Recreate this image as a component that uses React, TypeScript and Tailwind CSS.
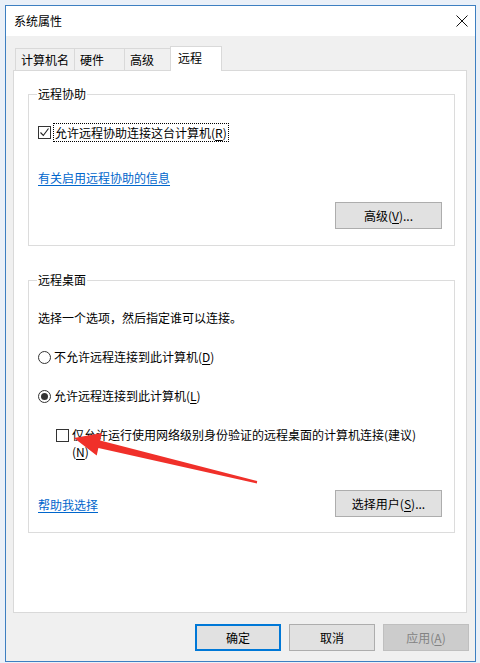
import type { ReactNode } from "react";

const font = "font-['Noto_Sans_CJK_SC','Noto_Sans',sans-serif]";

function Key({ k }: { k: string }) {
    return (
        <>
            (<span className="underline underline-offset-2">{k}</span>)
        </>
    );
}

function CheckBox({ checked }: { checked?: boolean }) {
    return (
        <span className="w-[13px] h-[13px] border border-[#333] bg-white flex items-center justify-center shrink-0">
            {checked && (
                <svg width="11" height="11" viewBox="0 0 11 11" fill="none">
                    <path d="M1.5 5.5l2.8 3 5.2-7" stroke="#222" strokeWidth="1.1" />
                </svg>
            )}
        </span>
    );
}

function Radio({ checked }: { checked?: boolean }) {
    return (
        <span className="w-[13px] h-[13px] rounded-full border border-[#333] bg-white flex items-center justify-center shrink-0">
            {checked && <span className="w-[7px] h-[7px] rounded-full bg-[#333]" />}
        </span>
    );
}

function Button({ children, variant = "normal", className = "" }: { children: ReactNode; variant?: "normal" | "default" | "disabled"; className?: string }) {
    const look =
        variant === "default"
            ? "border-2 border-[#0078d7] bg-[#e1e1e1] text-black"
            : variant === "disabled"
            ? "border border-[#bfbfbf] bg-[#cccccc] text-[#838383]"
            : "border border-[#adadad] bg-[#e1e1e1] text-black";
    return (
        <div className={`h-[27px] flex items-center justify-center text-[12px] ${look} ${className}`}>
            {children}
        </div>
    );
}

function GroupBox({ title, className, children }: { title: string; className: string; children: ReactNode }) {
    return (
        <div className={`relative border border-[#dcdcdc] ${className}`}>
            <span className="absolute -top-[9px] left-[8px] bg-white px-[1px] text-[12px] leading-[16px]">{title}</span>
            {children}
        </div>
    );
}

function Tab({ label, className }: { label: string; className: string }) {
    return (
        <div className={`h-[22px] border border-b-0 border-[#d9d9d9] bg-[#f0f0f0] flex items-center pl-[5px] text-[12px] ${className}`}>
            {label}
        </div>
    );
}

export default function App() {
    return (
        <div className={`relative w-[480px] h-[663px] bg-[#eaf0f8] pt-[5px] pl-[5px] ${font} text-black`}>
            <div className="w-[471px] h-[657px] border border-[#3d7fc1] bg-[#f0f0f0] flex flex-col">
                {/* title bar */}
                <div className="h-[30px] bg-white flex items-center justify-between pl-[8px] pr-[7px] shrink-0">
                    <span className="text-[12px]">系统属性</span>
                    <svg width="12" height="12" viewBox="0 0 12 12">
                        <path d="M0.5 0.5l11 11M11.5 0.5l-11 11" stroke="#111" strokeWidth="1" />
                    </svg>
                </div>

                <div className="pt-[10px] pl-[7px] pr-[8px]">
                    {/* tabs */}
                    <div className="h-[24px] flex items-end pl-[2px]">
                        <Tab label="计算机名" className="w-[60px]" />
                        <Tab label="硬件" className="w-[50px] border-l-0" />
                        <Tab label="高级" className="w-[46px] border-l-0" />
                        <div className="relative z-10 -ml-[1px] -mb-[1px] w-[52px] h-[25px] border border-b-0 border-[#d9d9d9] bg-white flex items-center pl-[7px] text-[12px] pb-[2px]">
                            远程
                        </div>
                    </div>

                    {/* tab panel */}
                    <div className="h-[543px] border border-[#d9d9d9] bg-white pt-[23px] pl-[14px]">
                        <GroupBox title="远程协助" className="w-[427px] h-[152px] pt-[28px] pl-[9px]">
                            <div className="flex items-center h-[19px]">
                                <CheckBox checked />
                                <span className="ml-[2px] h-[19px] border border-dotted border-black px-[1px] flex items-center text-[12px]">
                                    允许远程协助连接这台计算机<Key k="R" />
                                </span>
                            </div>
                            <div className="mt-[28px] h-[16px] leading-[16px] text-[12px] text-[#0066cc] underline underline-offset-2">
                                有关启用远程协助的信息
                            </div>
                            <div className="mt-[16px] flex justify-end pr-[12px]">
                                <Button className="w-[107px]">
                                    高级<Key k="V" />...
                                </Button>
                            </div>
                        </GroupBox>

                        <GroupBox title="远程桌面" className="mt-[34px] w-[427px] h-[253px] pt-[29px] pl-[9px]">
                            <div className="h-[16px] leading-[16px] text-[12px]">选择一个选项，然后指定谁可以连接。</div>
                            <div className="mt-[23px] h-[16px] flex items-center gap-[3px] text-[12px]">
                                <Radio />
                                <span>
                                    不允许远程连接到此计算机<Key k="D" />
                                </span>
                            </div>
                            <div className="mt-[23px] h-[16px] flex items-center gap-[3px] text-[12px]">
                                <Radio checked />
                                <span>
                                    允许远程连接到此计算机<Key k="L" />
                                </span>
                            </div>
                            <div className="mt-[22px] pl-[18px] flex items-start gap-[3px] text-[12px] leading-[17px]">
                                <span className="mt-[3px]">
                                    <CheckBox />
                                </span>
                                <span className="w-[352px]">
                                    仅允许运行使用网络级别身份验证的远程桌面的计算机连接(建议) <Key k="N" />
                                </span>
                            </div>
                            <div className="mt-[30px] flex items-center justify-between pr-[12px]">
                                <span className="mt-[3px] text-[12px] text-[#0066cc] underline underline-offset-2">帮助我选择</span>
                                <Button className="w-[107px]">
                                    选择用户<Key k="S" />...
                                </Button>
                            </div>
                        </GroupBox>
                    </div>
                </div>

                {/* dialog buttons */}
                <div className="mt-[11px] flex justify-end gap-[8px] pr-[6px]">
                    <Button variant="default" className="w-[86px]">确定</Button>
                    <Button className="w-[86px]">取消</Button>
                    <Button variant="disabled" className="w-[86px]">
                        应用<Key k="A" />
                    </Button>
                </div>
            </div>

            {/* red annotation arrow */}
            <svg className="absolute left-0 top-0 pointer-events-none" width="480" height="663" viewBox="0 0 480 663">
                <polygon
                    points="74,438 102,433 100.2,440.5 257.2,481 256.8,483.5 98.4,448 96.7,455.5"
                    fill="#f0302a"
                />
            </svg>
        </div>
    );
}
